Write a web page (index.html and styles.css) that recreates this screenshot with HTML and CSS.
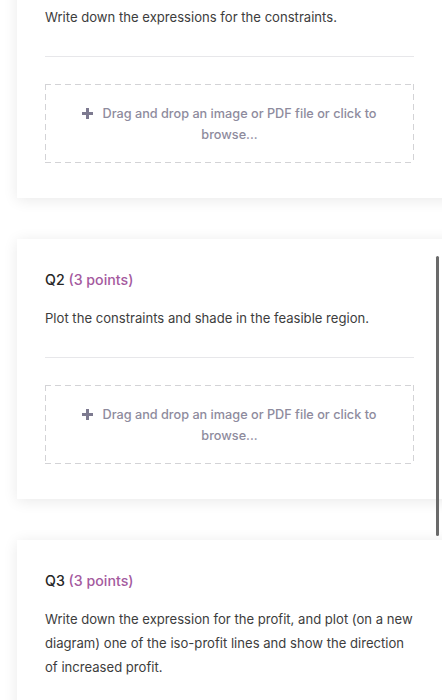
FILE: index.html
```html
<!DOCTYPE html>
<html>
<head>
<meta charset="utf-8">
<link rel="stylesheet" href="styles.css">
</head>
<body>
<div class="page">
  <section class="card card-first">
    <p class="prompt">Write down the expressions for the constraints.</p>
    <hr class="divider">
    <div class="upload">
      <svg class="plus" width="11" height="11" viewBox="0 0 11 11"><path d="M4 0h3v4h4v3H7v4H4V7H0V4h4z" fill="#7d7a90"/></svg><span>Drag and drop an image or PDF file or click to browse...</span>
    </div>
  </section>
  <section class="card">
    <h2 class="qtitle">Q2 <span class="points">(3 points)</span></h2>
    <p class="prompt">Plot the constraints and shade in the feasible region.</p>
    <hr class="divider">
    <div class="upload">
      <svg class="plus" width="11" height="11" viewBox="0 0 11 11"><path d="M4 0h3v4h4v3H7v4H4V7H0V4h4z" fill="#7d7a90"/></svg><span>Drag and drop an image or PDF file or click to browse...</span>
    </div>
  </section>
  <section class="card">
    <h2 class="qtitle">Q3 <span class="points">(3 points)</span></h2>
    <p class="prompt">Write down the expression for the profit, and plot (on a new diagram) one of the iso-profit lines and show the direction of increased profit.</p>
  </section>
</div>
<div class="scrollbar"></div>
</body>
</html>
```
FILE: styles.css
```css
html, body {
  margin: 0;
  padding: 0;
  background: #ffffff;
  overflow: hidden;
  height: 700px;
}
body {
  font-family: Inter, "Noto Sans", "Liberation Sans", sans-serif;
  color: #3a3a3a;
  position: relative;
}
.page {
  display: flex;
  flex-direction: column;
  gap: 41px;
  margin-top: -20px;
  padding-left: 17px;
}
.card {
  width: 369px;
  padding: 30px 80px 35px 28px;
  background: #fff;
  box-shadow: 0 2px 14px rgba(0, 0, 0, 0.09);
}
.card-first {
  padding-top: 25px;
}
.qtitle {
  margin: 0 0 15px;
  font-size: 14.2px;
  line-height: 22px;
  font-weight: 500;
  color: #262626;
}
.points {
  color: #a45a9e;
  font-weight: 500;
}
.prompt {
  margin: 0;
  font-size: 13.1px;
  line-height: 24px;
  color: #3d3d3d;
}
.divider {
  margin: 27px 0 27px;
  border: 0;
  height: 1px;
  background: #e7e7ea;
}
.upload {
  padding: 19px 28px 18px;
  text-align: center;
  font-size: 12.7px;
  line-height: 21px;
  font-weight: 500;
  color: #8e8b9d;
  background-image:
    repeating-linear-gradient(90deg, #d3d3d6 0 6px, transparent 6px 10px),
    repeating-linear-gradient(90deg, #d3d3d6 0 6px, transparent 6px 10px),
    repeating-linear-gradient(180deg, #d3d3d6 0 6px, transparent 6px 10px),
    repeating-linear-gradient(180deg, #d3d3d6 0 6px, transparent 6px 10px);
  background-size: 100% 1px, 100% 1px, 1px 100%, 1px 100%;
  background-position: 0 0, 0 100%, 0 0, 100% 0;
  background-repeat: no-repeat;
}
.plus {
  margin-right: 9px;
  vertical-align: -1px;
}
.scrollbar {
  position: absolute;
  left: 436px;
  top: 256px;
  width: 3px;
  height: 280px;
  border-radius: 2px;
  background: #6a6a6a;
}
```
